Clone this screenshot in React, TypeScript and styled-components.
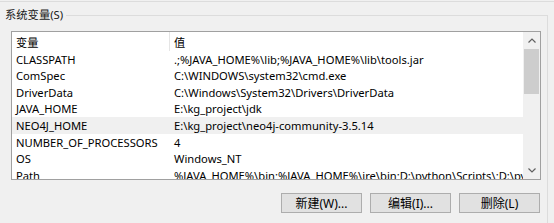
import { createGlobalStyle, styled } from "styled-components";

interface EnvVar {
  name: string;
  value: string;
}

const vars: EnvVar[] = [
  { name: "CLASSPATH", value: ".;%JAVA_HOME%\\lib;%JAVA_HOME%\\lib\\tools.jar" },
  { name: "ComSpec", value: "C:\\WINDOWS\\system32\\cmd.exe" },
  { name: "DriverData", value: "C:\\Windows\\System32\\Drivers\\DriverData" },
  { name: "JAVA_HOME", value: "E:\\kg_project\\jdk" },
  { name: "NEO4J_HOME", value: "E:\\kg_project\\neo4j-community-3.5.14" },
  { name: "NUMBER_OF_PROCESSORS", value: "4" },
  { name: "OS", value: "Windows_NT" },
  {
    name: "Path",
    value: "%JAVA_HOME%\\bin;%JAVA_HOME%\\jre\\bin;D:\\python\\Scripts\\;D:\\python\\",
  },
];

const selectedIdx = 4;

export default function App() {
  return (
    <>
      <GlobalStyle />
      <Frame>
        <Group>
          <GroupHeader>
            <GroupLabel>系统变量(S)</GroupLabel>
            <GroupRule />
          </GroupHeader>
          <GroupBody>
            <ListView>
              <ListContent>
                <HeaderRow>
                  <NameCell $header>变量</NameCell>
                  <ValueCell>值</ValueCell>
                </HeaderRow>
                {vars.map((v, idx) => (
                  <Row key={v.name} $selected={idx === selectedIdx}>
                    <NameCell>{v.name}</NameCell>
                    <ValueCell>{v.value}</ValueCell>
                  </Row>
                ))}
              </ListContent>
              <ScrollBar>
                <Arrow>
                  <svg width="8" height="5" viewBox="0 0 8 5">
                    <polyline points="0.5,4.5 4,1 7.5,4.5" fill="none" stroke="#606060" strokeWidth="1.2" />
                  </svg>
                </Arrow>
                <Track>
                  <Thumb />
                </Track>
                <Arrow>
                  <svg width="8" height="5" viewBox="0 0 8 5">
                    <polyline points="0.5,0.5 4,4 7.5,0.5" fill="none" stroke="#606060" strokeWidth="1.2" />
                  </svg>
                </Arrow>
              </ScrollBar>
            </ListView>
            <ButtonRow>
              <Button>新建(W)...</Button>
              <Button>编辑(I)...</Button>
              <Button>删除(L)</Button>
            </ButtonRow>
          </GroupBody>
        </Group>
      </Frame>
    </>
  );
}

const GlobalStyle = createGlobalStyle`
  body {
    margin: 0;
    background: #f0f0f0;
    font-family: "Noto Sans", "Noto Sans CJK SC", sans-serif;
    font-size: 12px;
    color: #000;
  }
`;

const Frame = styled.div`
  width: 554px;
  height: 223px;
  overflow: hidden;
  background: #f0f0f0;
  border-top: 1px solid #dcdcdc;
  margin-top: 1px;
  box-sizing: border-box;
`;

const Group = styled.div`
  width: 548px;
  margin-top: 5px;
  display: flex;
  flex-direction: column;
`;

const GroupHeader = styled.div`
  display: flex;
  height: 16px;
`;

const GroupLabel = styled.span`
  padding-left: 5px;
  padding-right: 3px;
  line-height: 16px;
  font-size: 11.3px;
  color: #1a1a1a;
`;

const GroupRule = styled.div`
  flex: 1;
  margin-top: 8px;
  border-top: 1px solid #dcdcdc;
  border-right: 1px solid #dcdcdc;
`;

const GroupBody = styled.div`
  border-right: 1px solid #dcdcdc;
  padding: 8px 6px 20px 11px;
  display: flex;
  flex-direction: column;
`;

const ListView = styled.div`
  height: 149px;
  border: 1px solid #a0a0a0;
  background: #fff;
  display: flex;
  box-sizing: border-box;
  font-size: 11.2px;
`;

const ListContent = styled.div`
  flex: 1;
  overflow: hidden;
  display: flex;
  flex-direction: column;
`;

const HeaderRow = styled.div`
  display: flex;
  flex: none;
  height: 19px;
  align-items: center;
`;

const Row = styled.div<{ $selected?: boolean }>`
  display: flex;
  flex: none;
  height: 16.57px;
  align-items: center;
  background: ${(p) => (p.$selected ? "#f0f0f0" : "transparent")};
`;

const NameCell = styled.div<{ $header?: boolean }>`
  width: 158px;
  flex: none;
  box-sizing: border-box;
  padding-left: 4px;
  white-space: nowrap;
  overflow: hidden;
  align-self: stretch;
  display: flex;
  align-items: center;
  border-right: 1px solid ${(p) => (p.$header ? "#e5e5e5" : "transparent")};
`;

const ValueCell = styled.div`
  flex: 1;
  padding-left: 4px;
  white-space: nowrap;
  overflow: hidden;
`;

const ScrollBar = styled.div`
  width: 17px;
  flex: none;
  background: #f0f0f0;
  display: flex;
  flex-direction: column;
`;

const Arrow = styled.div`
  height: 17px;
  flex: none;
  display: flex;
  align-items: center;
  justify-content: center;
`;

const Track = styled.div`
  flex: 1;
  padding: 0 1px;
`;

const Thumb = styled.div`
  height: 45px;
  background: #cdcdcd;
`;

const ButtonRow = styled.div`
  display: flex;
  justify-content: flex-end;
  gap: 8px;
  margin-top: 13px;
  padding-right: 1px;
`;

const Button = styled.button`
  width: 81px;
  height: 20px;
  box-sizing: border-box;
  background: #e1e1e1;
  border: 1px solid #adadad;
  border-radius: 0;
  padding: 0;
  font-family: inherit;
  font-size: 12px;
  color: #000;
`;
